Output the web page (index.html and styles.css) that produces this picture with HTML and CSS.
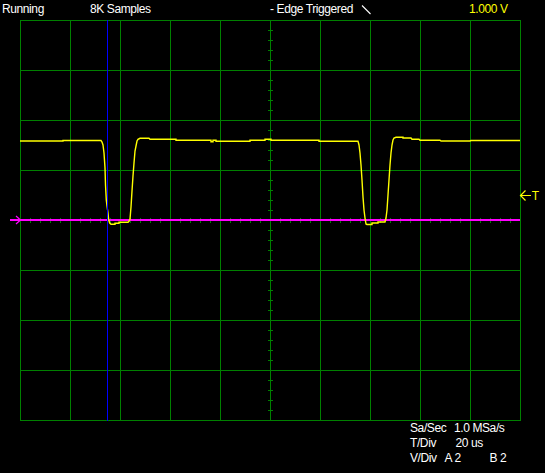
FILE: index.html
```html
<!DOCTYPE html>
<html>
<head>
<meta charset="utf-8">
<link rel="stylesheet" href="styles.css">
</head>
<body>
<div class="scope">
  <div class="topbar">
    <span class="t-run">Running</span>
    <span class="t-samp">8K Samples</span>
    <span class="t-trig">- Edge Triggered</span>
    <svg class="slope" width="108" height="20" viewBox="361 0 108 20"><line x1="362" y1="5.5" x2="370.5" y2="14" stroke="#ffffff" stroke-width="1.1"/></svg>
    <span class="t-volt">1.000 V</span>
  </div>
  <svg class="screen" width="545" height="401" viewBox="0 20 545 401">
    <g stroke="#008000" stroke-width="1" shape-rendering="crispEdges">
      <line x1="20.5" y1="20" x2="20.5" y2="421"/>
      <line x1="70.5" y1="20" x2="70.5" y2="421"/>
      <line x1="120.5" y1="20" x2="120.5" y2="421"/>
      <line x1="170.5" y1="20" x2="170.5" y2="421"/>
      <line x1="220.5" y1="20" x2="220.5" y2="421"/>
      <line x1="270.5" y1="20" x2="270.5" y2="421"/>
      <line x1="320.5" y1="20" x2="320.5" y2="421"/>
      <line x1="370.5" y1="20" x2="370.5" y2="421"/>
      <line x1="420.5" y1="20" x2="420.5" y2="421"/>
      <line x1="470.5" y1="20" x2="470.5" y2="421"/>
      <line x1="520.5" y1="20" x2="520.5" y2="421"/>
      <line x1="20" y1="20.5" x2="521" y2="20.5"/>
      <line x1="20" y1="70.5" x2="521" y2="70.5"/>
      <line x1="20" y1="120.5" x2="521" y2="120.5"/>
      <line x1="20" y1="170.5" x2="521" y2="170.5"/>
      <line x1="20" y1="220.5" x2="521" y2="220.5"/>
      <line x1="20" y1="270.5" x2="521" y2="270.5"/>
      <line x1="20" y1="320.5" x2="521" y2="320.5"/>
      <line x1="20" y1="370.5" x2="521" y2="370.5"/>
      <line x1="20" y1="420.5" x2="521" y2="420.5"/>
      <line x1="270.5" y1="20" x2="270.5" y2="421" stroke-width="5" stroke-dasharray="1 9"/>
      <line x1="20" y1="220.5" x2="521" y2="220.5" stroke-width="5" stroke-dasharray="1 9"/>
    </g>
    <g stroke="#ff00ff" fill="none">
      <line x1="10" y1="220" x2="520" y2="220" stroke-width="2" shape-rendering="crispEdges"/>
      <polyline points="16,216 20.5,220 16,224" stroke-width="1.2"/>
    </g>
    <polyline fill="none" stroke="#ffff00" stroke-width="1.4" stroke-linejoin="miter"
      points="20,141 63,141 63,140.5 101,140.5 102,142 103,145 104,153 105,168 105.5,185 106.3,200 107,206 108,213 108.7,220 109.7,223 111,224.3 115,224.3 115,223.3 119,223.3 119,222.3 128,222.3 129,221.3 130,219 131,207 132,191 133,176 134,163 135,151 136,146 137,141 138,139.3 140,138.3 149,138.3 150,139.3 176,139.3 176,140.3 211,140.3 211,141.7 213,141.7 213,140.3 216,140.3 216,141.3 250,141.3 250,140.3 265,140.3 265,139.3 271,139.3 271,140.3 319,140.3 319,141.3 358,141.3 359,145 360,153 361,165 362,180 363,197 364,210 365,218 366,224 367,224.5 372,224.5 372,223 378,223 378,222 385,222 386,218 387,210 388,195 389,180 390,165 391,153 392,145 393,140 394,138 396,137.3 403,137.3 403,138 411,138 412,139.3 419,139.3 420,140.3 440,140.3 441,141 470,141 471,140.5 520,140.5"/>
    <line x1="107.5" y1="20" x2="107.5" y2="421" stroke="#0000ff" stroke-width="1" shape-rendering="crispEdges"/>
    <g stroke="#ffff00" fill="none">
      <line x1="520.5" y1="195.5" x2="531" y2="195.5" stroke-width="1" shape-rendering="crispEdges"/>
      <polyline points="525.5,190.5 520.5,195.5 525.5,200.5" stroke-width="1.2"/>
    </g>
    <text class="tmark" x="531.8" y="200">T</text>
  </svg>
  <div class="status">
    <div class="row"><span class="lab1">Sa/Sec</span><span>1.0 MSa/s</span></div>
    <div class="row"><span class="lab2">T/Div</span><span>20 us</span></div>
    <div class="row"><span class="lab3">V/Div</span><span class="chA">A 2</span><span>B 2</span></div>
  </div>
</div>
</body>
</html>
```

FILE: styles.css
```css
html, body {
  margin: 0;
  padding: 0;
  background: #000000;
}
.scope {
  width: 545px;
  height: 473px;
  background: #000000;
  color: #ffffff;
  font-family: "Liberation Sans", Arial, sans-serif;
  font-size: 12px;
  letter-spacing: -0.4px;
  word-spacing: 0;
  overflow: hidden;
}
.topbar {
  display: flex;
  align-items: flex-start;
  height: 20px;
  box-sizing: border-box;
  padding-top: 1px;
  line-height: 16px;
  white-space: nowrap;
}
.t-run {
  margin-left: 2px;
  width: 88px;
}
.t-samp {
  width: 180px;
}
.t-trig {
  width: 91px;
}
.slope {
  display: block;
  margin-top: -1px;
}
.t-volt {
  color: #ffff00;
}
.screen {
  display: block;
}
.tmark {
  fill: #ffff00;
  font-family: "Liberation Sans", Arial, sans-serif;
  font-size: 12px;
}
.status {
  padding-left: 410px;
  line-height: 15px;
  white-space: nowrap;
}
.row {
  display: flex;
  height: 15px;
}
.lab1 {
  width: 44px;
}
.lab2 {
  width: 45.5px;
}
.lab3 {
  width: 34.5px;
}
.chA {
  width: 45px;
}
```
